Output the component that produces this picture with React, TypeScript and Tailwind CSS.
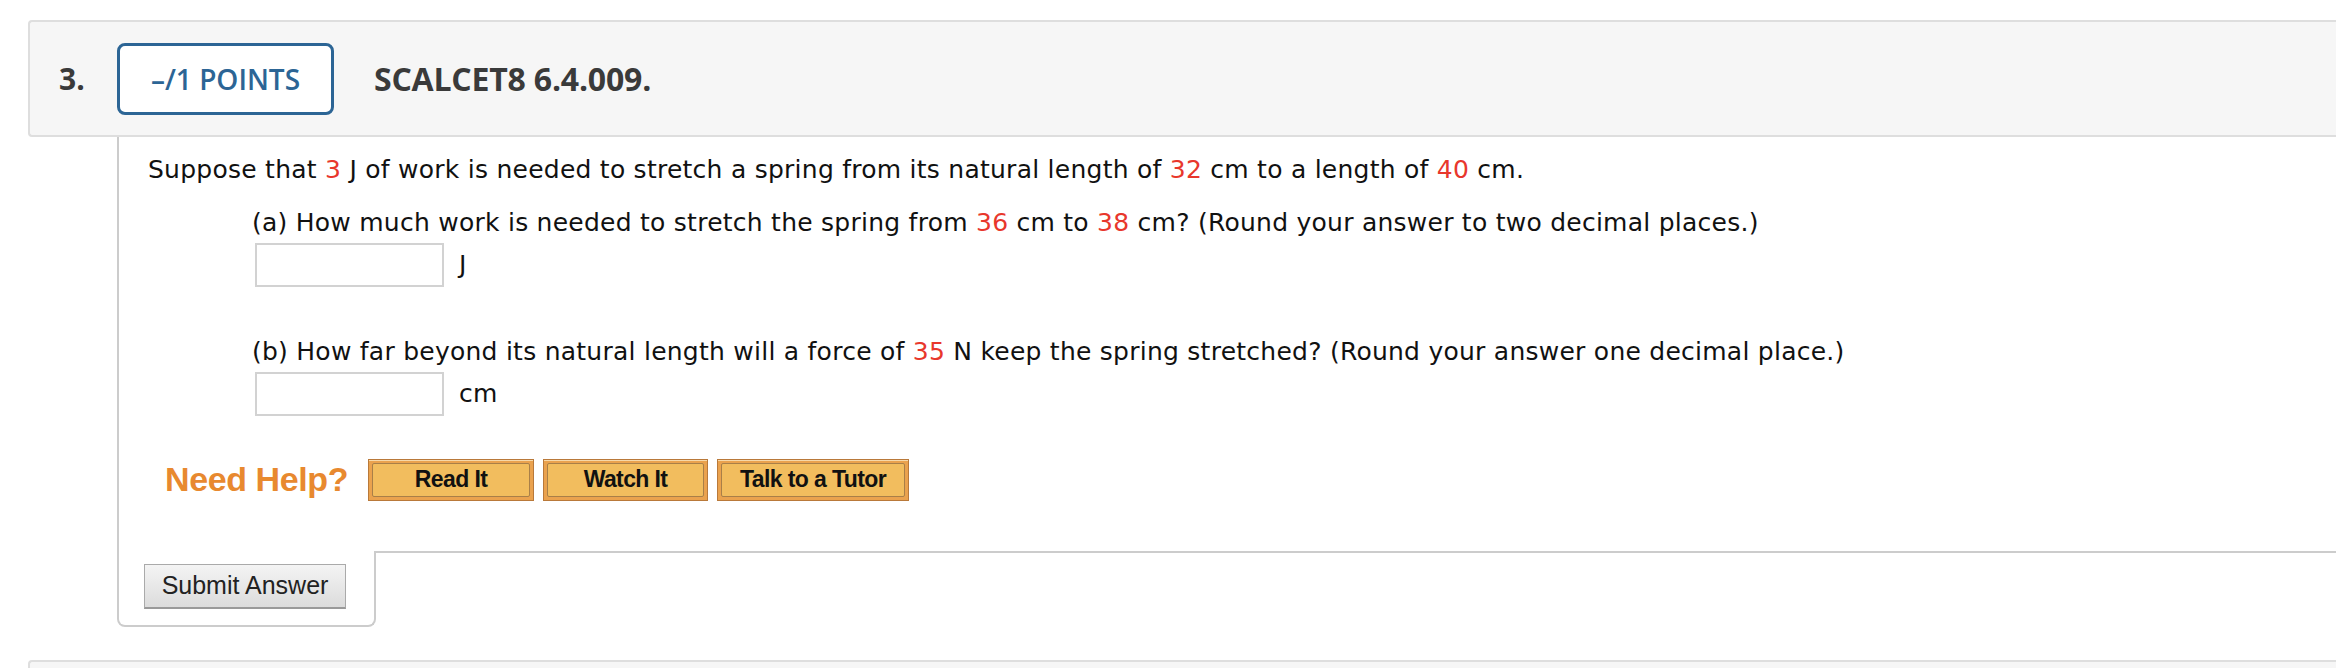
import React from "react";

const Red = ({ children }: { children: React.ReactNode }) => (
  <span className="text-[#e8372c]">{children}</span>
);

const HelpButton = ({ label, width }: { label: string; width: string }) => (
  <div
    className={`${width} h-[42px] border border-[#b9793a] bg-[#eaa24e] p-[3px] shadow-[inset_0_1px_0_#f7d8a8]`}
  >
    <div className="flex h-full items-center justify-center rounded-[2px] border border-[#a97f48] bg-[#f2bd5e] text-[23px] font-bold tracking-[-0.6px] text-[#111] [font-family:'Liberation_Sans',Arial,sans-serif]">
      {label}
    </div>
  </div>
);

const AnswerRow = ({ unit }: { unit: string }) => (
  <div className="mt-[5px] flex items-center">
    <div className="ml-[3px] h-[44px] w-[189px] border-2 border-[#d2d2d2] bg-white" />
    <span className="ml-[15px]">{unit}</span>
  </div>
);

export default function App() {
  return (
    <div className="h-[668px] overflow-hidden bg-white pt-[20px]">
      {/* question header */}
      <div className="ml-[28px] flex h-[117px] items-center rounded-l-[4px] border-y-2 border-l-2 border-[#dedede] bg-[#f6f6f6] [font-family:'Open_Sans',sans-serif]">
        <span className="ml-[29px] w-[58px] text-[30px] font-bold text-[#3a3a3a]">3.</span>
        <div className="flex h-[72px] w-[217px] items-center justify-center rounded-[8px] border-[3px] border-[#2c6595] bg-white text-[28px] font-semibold text-[#2c6595]">
          –/1 POINTS
        </div>
        <span className="ml-[40px] text-[32px] font-bold tracking-[-0.2px] text-[#3a3a3a]">
          SCALCET8 6.4.009.
        </span>
      </div>

      {/* question body */}
      <div className="ml-[117px] [font-family:'DejaVu_Sans',Verdana,sans-serif] text-[25px] tracking-[0.25px] text-[#111]">
        <div className="border-l-2 border-[#cccccc] pl-[29px] pt-[18px]">
          <p className="leading-[30px]">
            Suppose that <Red>3</Red> J of work is needed to stretch a spring from its natural
            length of <Red>32</Red> cm to a length of <Red>40</Red> cm.
          </p>
          <div className="ml-[104px]">
            <p className="mt-[23px] leading-[30px]">
              (a) How much work is needed to stretch the spring from <Red>36</Red> cm to{" "}
              <Red>38</Red> cm? (Round your answer to two decimal places.)
            </p>
            <AnswerRow unit="J" />
            <p className="mt-[50px] leading-[30px]">
              (b) How far beyond its natural length will a force of <Red>35</Red> N keep the
              spring stretched? (Round your answer one decimal place.)
            </p>
            <AnswerRow unit="cm" />
          </div>

          <div className="mt-[38px] flex items-center pb-[46px]">
            <span className="ml-[17px] mr-[20px] text-[34px] font-bold tracking-[-0.4px] text-[#e8892f] [font-family:'Liberation_Sans',Arial,sans-serif]">
              Need Help?
            </span>
            <div className="flex gap-[9px]">
              <HelpButton label="Read It" width="w-[166px]" />
              <HelpButton label="Watch It" width="w-[165px]" />
              <HelpButton label="Talk to a Tutor" width="w-[192px]" />
            </div>
          </div>
        </div>

        <div className="flex">
          <div className="h-[76px] w-[259px] rounded-b-[8px] border-x-2 border-b-2 border-[#cccccc] pl-[25px] pt-[13px]">
            <button className="h-[45px] w-[202px] border border-[#aaaaaa] border-b-2 border-b-[#9a9a9a] bg-gradient-to-b from-[#f4f4f4] to-[#dcdcdc] text-[25px] tracking-normal text-[#222] [font-family:'Liberation_Sans',Arial,sans-serif]">
              Submit Answer
            </button>
          </div>
          <div className="flex-1 border-t-2 border-[#cccccc]" />
        </div>
      </div>

      {/* next question header */}
      <div className="ml-[28px] mt-[33px] h-[40px] rounded-tl-[4px] border-l-2 border-t-2 border-[#dedede] bg-[#f6f6f6]" />
    </div>
  );
}
